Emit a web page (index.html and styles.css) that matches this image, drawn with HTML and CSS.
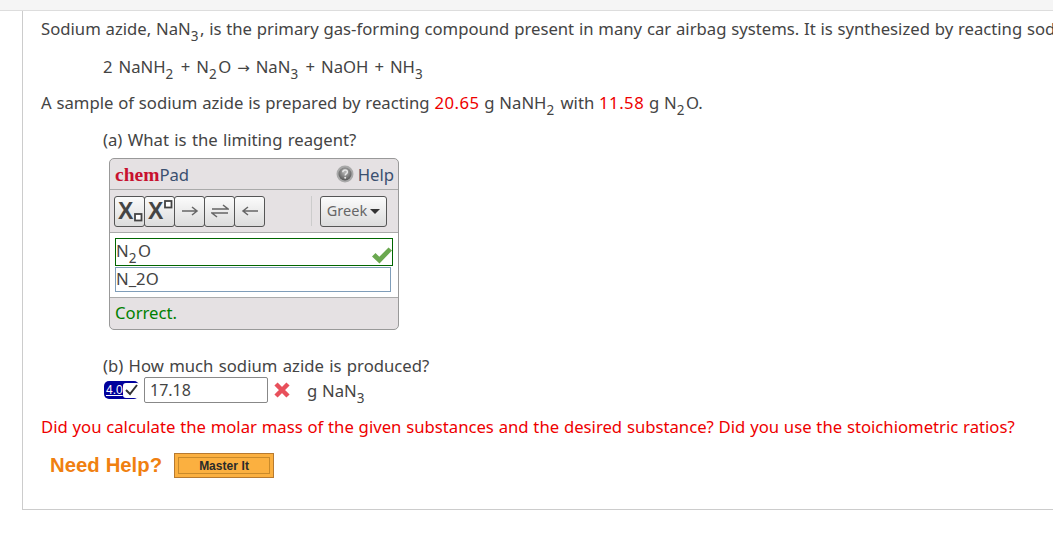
FILE: index.html
```html
<!DOCTYPE html>
<html lang="en">
<head>
<meta charset="utf-8">
<title>Sodium azide</title>
<link rel="stylesheet" href="styles.css">
</head>
<body>
<div class="topbar"></div>
<main class="question">
  <p class="line first">Sodium azide, NaN<sub>3</sub>, is the primary gas-forming compound present in many car airbag systems. It is synthesized by reacting sodium amide with dinitrogen monoxide.</p>
  <p class="line eq">2 NaNH<sub>2</sub> + N<sub>2</sub>O <span class="arrow">→</span> NaN<sub>3</sub> + NaOH + NH<sub>3</sub></p>
  <p class="line">A sample of sodium azide is prepared by reacting <span class="red">20.65</span> g NaNH<sub>2</sub> with <span class="red">11.58</span> g N<sub>2</sub>O.</p>
  <p class="line part">(a) What is the limiting reagent?</p>
  <section class="pad">
    <header class="pad-head">
      <span class="brand"><b>chem</b>Pad</span>
      <span class="help">
        <svg class="help-icon" width="18" height="18" viewBox="0 0 18 18"><defs><radialGradient id="glow" cx="50%" cy="35%" r="65%"><stop offset="0" stop-color="#bbb"/><stop offset="1" stop-color="#555"/></radialGradient></defs><circle cx="9" cy="9" r="8.500" fill="#a9a9a9"/><circle cx="9" cy="9" r="6.500" fill="url(#glow)"/><path d="M6.800 7.200c0-3 4.600-3 4.600-.2 0 1.700-2.200 1.700-2.200 3.500" fill="none" stroke="#e8e8e8" stroke-width="1.500"/><circle cx="9.200" cy="12.700" r="1" fill="#e8e8e8"/></svg>
        Help
      </span>
    </header>
    <div class="toolbar">
      <div class="btns">
        <button class="tool big">X<svg class="sq low" width="9" height="9" viewBox="0 0 9 9"><rect x="1" y="1" width="6.500" height="6.500" fill="#fff" stroke="#444" stroke-width="1.800"/></svg></button>
        <button class="tool big">X<svg class="sq high" width="9" height="9" viewBox="0 0 9 9"><rect x="1" y="1" width="6.500" height="6.500" fill="#fff" stroke="#444" stroke-width="1.800"/></svg></button>
        <button class="tool"><svg width="18" height="12" viewBox="0 0 18 12"><path d="M1 6h15M11 2l5 4-5 4" fill="none" stroke="#666" stroke-width="1.500"/></svg></button>
        <button class="tool"><svg width="18" height="14" viewBox="0 0 18 14"><path d="M1 5h16l-5-4M17 9H1l5 4" fill="none" stroke="#666" stroke-width="1.500"/></svg></button>
        <button class="tool"><svg width="18" height="12" viewBox="0 0 18 12"><path d="M17 6H2M7 2L2 6l5 4" fill="none" stroke="#666" stroke-width="1.500"/></svg></button>
      </div>
      <span class="sep"></span>
      <button class="greek">Greek<span class="caret"></span></button>
    </div>
    <div class="pad-body">
      <div class="rendered">N<sub>2</sub>O
        <svg class="ok" width="20" height="17" viewBox="0 0 20 17"><path d="M0 9.500l3.500-3.500 3.800 3.800L16.500 0.500 20 3.500 7.500 16.500z" fill="#6aa84f"/></svg>
      </div>
      <div class="typed">N_2O</div>
    </div>
    <footer class="pad-foot">Correct.</footer>
  </section>
  <p class="line part partb">(b) How much sodium azide is produced?</p>
  <div class="answer">
    <span class="badge"><u>4.0</u><span class="tick"><svg width="17" height="14" viewBox="0 0 17 14"><path d="M3 7l4 4 7-9" fill="none" stroke="#333" stroke-width="2"/></svg></span></span>
    <span class="input">17.18</span>
    <svg class="cross" width="18" height="18" viewBox="0 0 18 18"><path d="M3 3l12 12M15 3L3 15" stroke="#e8505b" stroke-width="4.500"/></svg>
    <span class="unit">g NaN<sub>3</sub></span>
  </div>
  <p class="line hint">Did you calculate the molar mass of the given substances and the desired substance? Did you use the stoichiometric ratios?</p>
  <div class="need">
    <span class="need-text">Need Help?</span>
    <span class="master"><span>Master It</span></span>
  </div>
</main>
</body>
</html>
```

FILE: styles.css
```css
html, body { margin: 0; padding: 0; background: #fff; overflow: hidden; }
body { font-family: "Noto Sans", Tahoma, sans-serif; font-size: 16.700px; word-spacing: 0.450px; color: #444; }
.topbar { height: 10px; background: #f5f5f5; border-bottom: 1px solid #ddd; }
.question { margin-left: 22px; height: 499px; border-left: 1px solid #ccc; border-bottom: 1px solid #ccc; padding-left: 18px; overflow: hidden; box-sizing: border-box; }
.line { margin: 0; white-space: nowrap; line-height: 20px; }
.first { padding-top: 8px; }
.eq { margin: 18px 0 0 62px; word-spacing: 1.600px; }
.eq + .line { margin-top: 15px; }
.part { margin: 17px 0 0 62px; word-spacing: 1px; }
sub { font-size: 13.500px; line-height: 0; vertical-align: -6px; padding-right: 1.500px; }
.arrow { font-family: "DejaVu Sans", sans-serif; font-size: 15px; }
.red { color: #e00; letter-spacing: 0.500px; }
.pad { margin: 8px 0 0 68px; width: 288px; height: 170px; border: 1px solid #999; border-radius: 5px; background: #e5e1e3; display: flex; flex-direction: column; }
.pad-head { height: 30px; border-bottom: 1px solid #aaa; display: flex; align-items: center; justify-content: space-between; padding: 0 4px 0 5px; color: #3b5070; }
.brand b { color: #c8102e; font-family: "Liberation Serif", serif; font-size: 19.500px; }
.help { display: flex; align-items: center; gap: 4px; }
.help-icon { display: block; }
.toolbar { height: 42px; border-bottom: 1px solid #aaa; display: flex; align-items: center; padding-left: 4px; }
.btns { display: flex; }
.tool { width: 31px; height: 31px; margin-right: -1px; padding: 0; border: 1px solid #555; border-radius: 3px; background: linear-gradient(#fbfbfb, #dcdcdc); display: flex; align-items: center; justify-content: center; font: bold 23px "Liberation Sans", sans-serif; color: #444; position: relative; }
.big { justify-content: flex-start; padding-left: 3px; }
.sq { position: absolute; }
.low { right: 1px; bottom: 4px; }
.high { right: 1px; top: 3px; }
.sep { width: 1px; height: 30px; background: #ccc; margin-left: 47px; }
.greek { margin-left: 8px; width: 67px; height: 31px; padding: 0 0 2px; border: 1px solid #555; border-radius: 3px; background: linear-gradient(#fbfbfb, #dcdcdc); font: 14.500px "Noto Sans", sans-serif; color: #666; display: flex; align-items: center; justify-content: center; gap: 3px; }
.caret { border: 5px solid transparent; border-top-color: #333; border-bottom: 0; margin-top: 2px; }
.pad-body { background: #fff; border-bottom: 1px solid #aaa; padding: 5px 0 0 5px; box-sizing: border-box; height: 65px; }
.rendered { width: 276px; height: 26px; border: 1px solid #060; position: relative; line-height: 24px; }
.ok { position: absolute; right: 0; bottom: 1px; }
.typed { width: 274px; height: 23px; margin-top: 1px; border: 1px solid #7f9db9; line-height: 22px; }
.pad-foot { flex: 1; padding: 0 0 2px 5px; color: #008000; display: flex; align-items: center; }
.partb { margin-top: 26px; }
.answer { display: flex; align-items: center; height: 26px; margin: 1px 0 0 63px; }
.badge { width: 35px; height: 18px; background: #00009c; border-radius: 5px; display: flex; align-items: center; justify-content: space-between; color: #fff; font: 12px "Liberation Sans", sans-serif; padding-left: 2px; box-sizing: border-box; }
.tick { width: 17px; height: 15px; background: #fff; border-radius: 3px; margin-right: 1px; display: flex; align-items: center; }
.input { height: 24px; margin-left: 5px; border: 1px solid #888; border-radius: 2px; padding-left: 5px; width: 117px; line-height: 24px; font-size: 16px; }
.cross { margin-left: 5px; }
.unit { margin-left: 16px; }
.hint { margin-top: 14px; color: #e00; }
.need { display: flex; align-items: center; margin: 16px 0 0 9px; }
.need-text { font: bold 20.300px "Liberation Sans", sans-serif; color: #f08010; }
.master { margin-left: 12px; width: 100px; height: 25px; box-sizing: border-box; border: 1px solid #b87a2f; background: #fbb040; padding: 3px; display: flex; }
.master span { flex: 1; border: 1px solid #c98a2a; text-align: center; font: bold 12px/17px "Liberation Sans", sans-serif; color: #2a2a2a; }
```
